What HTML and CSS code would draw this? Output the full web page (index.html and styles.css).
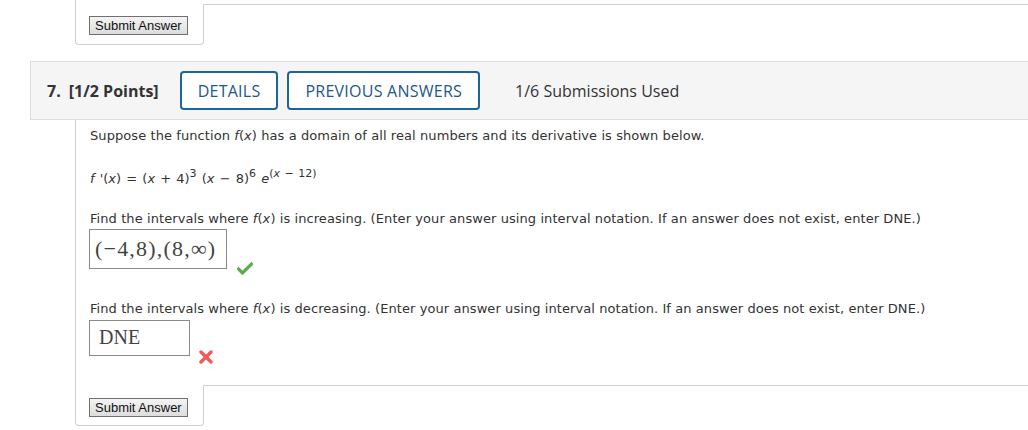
FILE: index.html
```html
<!DOCTYPE html>
<html>
<head>
<meta charset="utf-8">
<link rel="stylesheet" href="styles.css">
</head>
<body>
<div class="page">
  <div class="tab-row tab-row-top">
    <div class="tab-body">
      <button class="submit-btn">Submit Answer</button>
    </div>
    <div class="tab-corner"></div>
    <div class="tab-rest"></div>
  </div>

  <div class="q-header">
    <span class="q-num">7.</span>
    <span class="q-points">[1/2 Points]</span>
    <button class="hdr-btn">DETAILS</button>
    <button class="hdr-btn">PREVIOUS ANSWERS</button>
    <span class="q-subs">1/6 Submissions Used</span>
  </div>

  <div class="q-body">
    <p class="txt p-first">Suppose the function <i>f</i>(<i>x</i>) has a domain of all real numbers and its derivative is shown below.</p>
    <p class="txt math"><i>f</i> '(<i>x</i>) = (<i>x</i> + 4)<sup>3</sup> (<i>x</i> − 8)<sup>6</sup> <i>e</i><sup>(<i>x</i> − 12)</sup></p>
    <p class="txt p-ask">Find the intervals where <i>f</i>(<i>x</i>) is increasing. (Enter your answer using interval notation. If an answer does not exist, enter DNE.)</p>
    <div class="ans-row ans-row-1">
      <div class="ans ans-wide">(−4,8),(8,∞)</div>
      <svg class="mark check" width="16" height="13" viewBox="0 0 16 13">
        <path d="M1.5 7 L5.5 11 L14.5 2" fill="none" stroke="#5aac4f" stroke-width="3.2" stroke-linecap="square"/>
      </svg>
    </div>
    <p class="txt p-ask2">Find the intervals where <i>f</i>(<i>x</i>) is decreasing. (Enter your answer using interval notation. If an answer does not exist, enter DNE.)</p>
    <div class="ans-row ans-row-2">
      <div class="ans ans-narrow">DNE</div>
      <svg class="mark cross" width="14" height="14" viewBox="0 0 14 14">
        <path d="M2 2 L12 12 M12 2 L2 12" fill="none" stroke="#f05a5a" stroke-width="3.4" stroke-linecap="round"/>
      </svg>
    </div>
  </div>

  <div class="tab-row tab-row-bottom">
    <div class="tab-body">
      <button class="submit-btn">Submit Answer</button>
    </div>
    <div class="tab-corner"></div>
    <div class="tab-rest"></div>
  </div>
</div>
</body>
</html>
```

FILE: styles.css
```css
html, body {
  margin: 0;
  padding: 0;
  background: #fff;
  overflow: hidden;
}

.page {
  width: 1040px;
}

/* tab-shaped submit areas */
.tab-row {
  display: flex;
  margin-left: 75px;
}
.tab-body {
  box-sizing: border-box;
  width: 124px;
  border-left: 1px solid #cfcfcf;
  border-bottom: 1px solid #cfcfcf;
  border-bottom-left-radius: 4px;
  padding-left: 13px;
}
.tab-corner {
  width: 4px;
  margin-top: 4px;
  border-right: 1px solid #cfcfcf;
  border-bottom: 1px solid #cfcfcf;
  border-bottom-right-radius: 4px;
}
.tab-rest {
  flex: 1;
  margin-top: 4px;
  border-top: 1px solid #cfcfcf;
}
.tab-row-top .tab-body {
  padding-top: 16px;
  padding-bottom: 9px;
}
.tab-row-bottom .tab-body {
  padding-top: 17px;
  padding-bottom: 8px;
}

.submit-btn {
  display: block;
  font-family: "Liberation Sans", Arial, sans-serif;
  font-size: 13px;
  line-height: 15px;
  color: #111;
  padding: 1px 5px;
  margin: 0;
  border: 1px solid #707070;
  border-radius: 0;
  background: linear-gradient(#f4f4f4, #dddddd);
}

/* question header */
.q-header {
  margin-top: 16px;
  margin-left: 30px;
  height: 57px;
  display: flex;
  align-items: center;
  background: #f5f5f5;
  border: 1px solid #dedede;
  font-family: "Open Sans", sans-serif;
  font-size: 16px;
  color: #333;
  padding-left: 16px;
}
.q-num {
  font-weight: 700;
  margin-right: 8px;
}
.q-points {
  font-weight: 700;
  margin-right: 21px;
}
.hdr-btn {
  font-family: "Open Sans", sans-serif;
  font-size: 16px;
  letter-spacing: 0.25px;
  color: #23578a;
  background: #fff;
  border: 2px solid #1b659c;
  border-radius: 4px;
  height: 39px;
  padding: 0 16px;
  margin: 0 9px 0 0;
}
.q-subs {
  margin-left: 26px;
  color: #333;
}

/* question body */
.q-body {
  margin-left: 75px;
  border-left: 1px solid #cfcfcf;
  padding-left: 14px;
  padding-top: 8px;
  padding-bottom: 25px;
  font-family: "DejaVu Sans", Verdana, sans-serif;
  font-size: 13px;
  color: #333;
}
.txt {
  margin: 0;
  line-height: 16px;
  letter-spacing: 0.08px;
}
.txt i {
  font-style: italic;
}
.math {
  margin-top: 27px;
  font-size: 13px;
  word-spacing: 1px;
  letter-spacing: 0;
}
.math sup {
  font-size: 11px;
  line-height: 0;
  vertical-align: 6px;
}
.p-ask {
  margin-top: 24px;
}
.p-ask2 {
  margin-top: 32px;
}

.ans-row {
  display: flex;
  align-items: flex-end;
  margin-left: -1px;
}
.ans-row-1 {
  margin-top: 2px;
}
.ans-row-2 {
  margin-top: 3px;
}
.ans {
  border: 1px solid #8a8a8a;
  font-family: "Liberation Serif", "DejaVu Serif", serif;
  color: #444;
  box-sizing: border-box;
}
.ans-wide {
  width: 138px;
  height: 40px;
  font-size: 22px;
  line-height: 38px;
  padding-left: 5px;
  letter-spacing: 1.2px;
}
.ans-narrow {
  width: 101px;
  height: 36px;
  font-size: 20px;
  line-height: 32px;
  padding-left: 9px;
}
.mark {
  display: block;
}
.check {
  margin-left: 10px;
  margin-bottom: -6px;
}
.cross {
  margin-left: 9px;
  margin-bottom: -8px;
}
```
